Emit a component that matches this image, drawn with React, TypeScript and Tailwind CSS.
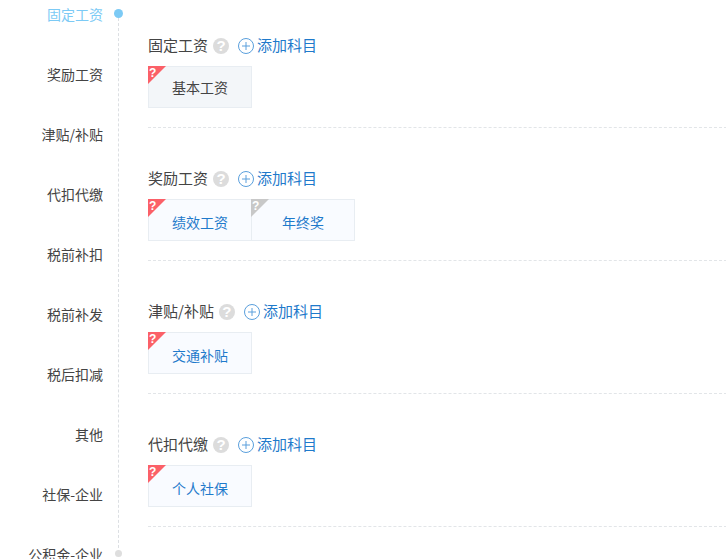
const navItems = ["固定工资", "奖励工资", "津贴/补贴", "代扣代缴", "税前补扣", "税前补发", "税后扣减", "其他", "社保-企业", "公积金-企业"];

const sections = [
  { title: "固定工资", cards: [{ name: "基本工资", on: true, selected: true }] },
  { title: "奖励工资", cards: [{ name: "绩效工资", on: true }, { name: "年终奖", on: false }] },
  { title: "津贴/补贴", cards: [{ name: "交通补贴", on: true }] },
  { title: "代扣代缴", cards: [{ name: "个人社保", on: true }] },
];

type Card = { name: string; on: boolean; selected?: boolean };

function SalaryCard({ card }: { card: Card }) {
  return (
    <div className={`relative w-[104px] h-[42px] -mr-px border border-[#e8edf2] flex items-center justify-center text-sm ${card.selected ? "bg-[#f3f6f9] text-[#444]" : "pt-1 bg-[#f9fbff] text-[#1f7acb]"}`}>
      <svg className="absolute -left-px -top-px" width="18" height="18" viewBox="0 0 18 18">
        <polygon points="0,0 18,0 0,18" fill={card.on ? "#fb6068" : "#c8c8c8"} />
      </svg>
      <span className="absolute left-0 -top-px text-[12px] leading-[14px] font-bold font-['Liberation_Sans',sans-serif] text-white">?</span>
      {card.name}
    </div>
  );
}

function Section({ title, cards }: { title: string; cards: Card[] }) {
  return (
    <section className="pb-[19px] mb-[41px] border-b border-dashed border-[#e2e5e8]">
      <div className="flex items-center h-5 text-[15px] text-[#444]">
        <span className="pb-0.5">{title}</span>
        <span className="ml-[5px] w-4 h-4 rounded-full bg-[#dcdcdc] text-white text-[15px] font-bold font-['Liberation_Sans',sans-serif] leading-4 text-center">?</span>
        <button className="flex items-center ml-[9px] text-[#1f7acb]">
          <svg width="16" height="16" viewBox="0 0 16 16" fill="none" stroke="#5a9fdc" strokeWidth="1">
            <circle cx="8" cy="8" r="7.5" />
            <path d="M4 8h8M8 4v8" />
          </svg>
          <span className="ml-[3px] pb-0.5">添加科目</span>
        </button>
      </div>
      <div className="flex mt-[10px]">
        {cards.map((c) => (
          <SalaryCard key={c.name} card={c} />
        ))}
      </div>
    </section>
  );
}

export default function App() {
  return (
    <div className="flex h-[559px] w-[726px] overflow-hidden bg-white font-['Noto_Sans_CJK_SC','Liberation_Sans',sans-serif]">
      <nav className="relative w-[119px] shrink-0 h-[540px] mt-[13px] border-r border-dashed border-[#dcdfe3]">
        <span className="absolute -right-[5px] -top-1 w-[9px] h-[9px] rounded-full bg-[#7ccaf5]" />
        <span className="absolute -right-1 -bottom-1 w-[7px] h-[7px] rounded-full bg-[#dedede]" />
        <ul className="-mt-[29px] pr-[15px] text-sm text-[#444]">
          {navItems.map((item, i) => (
            <li key={item} className={`h-[60px] flex items-center justify-end whitespace-nowrap ${i === 0 ? "text-[#7ccaf5]" : ""}`}>
              {item}
            </li>
          ))}
        </ul>
      </nav>
      <main className="ml-[29px] flex-1 pt-[36px] -mr-px">
        {sections.map((s) => (
          <Section key={s.title} title={s.title} cards={s.cards} />
        ))}
      </main>
    </div>
  );
}
